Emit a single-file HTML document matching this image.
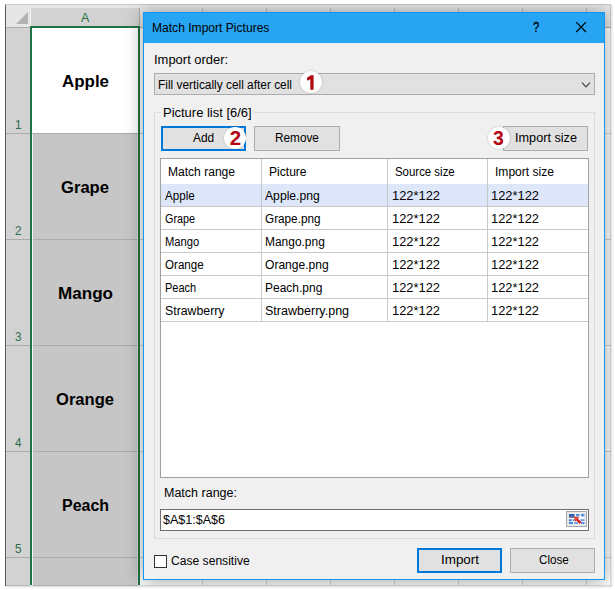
<!DOCTYPE html>
<html>
<head>
<meta charset="utf-8">
<title>Match Import Pictures</title>
<style>
html,body{margin:0;padding:0;background:#fff;}
body{width:615px;height:590px;position:relative;overflow:hidden;font-family:"Liberation Sans",sans-serif;font-size:12px;color:#000;}
.a{position:absolute;}
.t{position:absolute;white-space:nowrap;display:block;transform-origin:0 50%;}
</style>
</head>
<body>
<div class="a" style="left:5px;top:4px;width:606px;height:582px;background:#fff;box-shadow:1px 1px 2px rgba(0,0,0,0.16);overflow:hidden"><div class="a" style="left:-5px;top:-4px;width:615px;height:590px">
<div class="a" style="left:5px;top:5px;width:606px;height:22px;background:#e6e6e6"></div>
<div class="a" style="left:5px;top:4px;width:606px;height:1px;background:#c9c9c9"></div>
<div class="a" style="left:5px;top:27px;width:606px;height:1px;background:#ababab"></div>
<div class="a" style="left:31px;top:8px;width:108px;height:19px;background:#d2d2d2"></div>
<div class="a" style="left:30px;top:8px;width:1px;height:18px;background:#f3f3f3"></div>
<div class="a" style="left:139px;top:8px;width:1px;height:19px;background:#ababab"></div>
<div class="a" style="left:202px;top:8px;width:1px;height:19px;background:#bcbcbc"></div>
<div class="a" style="left:266px;top:8px;width:1px;height:19px;background:#bcbcbc"></div>
<div class="a" style="left:330px;top:8px;width:1px;height:19px;background:#bcbcbc"></div>
<div class="a" style="left:394px;top:8px;width:1px;height:19px;background:#bcbcbc"></div>
<div class="a" style="left:458px;top:8px;width:1px;height:19px;background:#bcbcbc"></div>
<div class="a" style="left:522px;top:8px;width:1px;height:19px;background:#bcbcbc"></div>
<div class="a" style="left:586px;top:8px;width:1px;height:19px;background:#bcbcbc"></div>
<svg class="a" style="left:16px;top:12px" width="13" height="13"><polygon points="12,0 12,12 0,12" fill="#b2b2b2"/></svg>
<span class="t" style="left:81px;top:10px;font-size:13px;line-height:15px;font-weight:normal;color:#217346;transform:scaleX(0.9500)">A</span>
<div class="a" style="left:6px;top:28px;width:24px;height:105px;background:#d2d2d2"></div>
<div class="a" style="left:6px;top:133px;width:24px;height:1px;background:#ababab"></div>
<div class="a" style="left:32px;top:28px;width:106px;height:105px;background:#fff"></div>
<div class="a" style="left:32px;top:133px;width:106px;height:1px;background:#ababab"></div>
<div class="a" style="left:140px;top:133px;width:471px;height:1px;background:#d4d4d4"></div>
<span class="t" style="left:15px;top:117px;font-size:13px;line-height:15px;font-weight:normal;color:#2b6b4a;transform:scaleX(0.9000)">1</span>
<div class="a" style="left:6px;top:134px;width:24px;height:105px;background:#d2d2d2"></div>
<div class="a" style="left:6px;top:239px;width:24px;height:1px;background:#ababab"></div>
<div class="a" style="left:32px;top:134px;width:106px;height:105px;background:#c6c6c6"></div>
<div class="a" style="left:32px;top:239px;width:106px;height:1px;background:#ababab"></div>
<div class="a" style="left:140px;top:239px;width:471px;height:1px;background:#d4d4d4"></div>
<span class="t" style="left:15px;top:223px;font-size:13px;line-height:15px;font-weight:normal;color:#2b6b4a;transform:scaleX(0.9000)">2</span>
<div class="a" style="left:6px;top:240px;width:24px;height:105px;background:#d2d2d2"></div>
<div class="a" style="left:6px;top:345px;width:24px;height:1px;background:#ababab"></div>
<div class="a" style="left:32px;top:240px;width:106px;height:105px;background:#c6c6c6"></div>
<div class="a" style="left:32px;top:345px;width:106px;height:1px;background:#ababab"></div>
<div class="a" style="left:140px;top:345px;width:471px;height:1px;background:#d4d4d4"></div>
<span class="t" style="left:15px;top:329px;font-size:13px;line-height:15px;font-weight:normal;color:#2b6b4a;transform:scaleX(0.9000)">3</span>
<div class="a" style="left:6px;top:346px;width:24px;height:105px;background:#d2d2d2"></div>
<div class="a" style="left:6px;top:451px;width:24px;height:1px;background:#ababab"></div>
<div class="a" style="left:32px;top:346px;width:106px;height:105px;background:#c6c6c6"></div>
<div class="a" style="left:32px;top:451px;width:106px;height:1px;background:#ababab"></div>
<div class="a" style="left:140px;top:451px;width:471px;height:1px;background:#d4d4d4"></div>
<span class="t" style="left:15px;top:435px;font-size:13px;line-height:15px;font-weight:normal;color:#2b6b4a;transform:scaleX(0.9000)">4</span>
<div class="a" style="left:6px;top:452px;width:24px;height:105px;background:#d2d2d2"></div>
<div class="a" style="left:6px;top:557px;width:24px;height:1px;background:#ababab"></div>
<div class="a" style="left:32px;top:452px;width:106px;height:105px;background:#c6c6c6"></div>
<div class="a" style="left:32px;top:557px;width:106px;height:1px;background:#ababab"></div>
<div class="a" style="left:140px;top:557px;width:471px;height:1px;background:#d4d4d4"></div>
<span class="t" style="left:15px;top:541px;font-size:13px;line-height:15px;font-weight:normal;color:#2b6b4a;transform:scaleX(0.9000)">5</span>
<div class="a" style="left:6px;top:558px;width:24px;height:28px;background:#d2d2d2"></div>
<div class="a" style="left:6px;top:586px;width:24px;height:1px;background:#ababab"></div>
<div class="a" style="left:32px;top:558px;width:106px;height:28px;background:#c6c6c6"></div>
<div class="a" style="left:32px;top:586px;width:106px;height:1px;"></div>
<div class="a" style="left:140px;top:586px;width:471px;height:1px;background:#d4d4d4"></div>
<div class="a" style="left:202px;top:28px;width:1px;height:557px;background:#d4d4d4"></div>
<div class="a" style="left:266px;top:28px;width:1px;height:557px;background:#d4d4d4"></div>
<div class="a" style="left:330px;top:28px;width:1px;height:557px;background:#d4d4d4"></div>
<div class="a" style="left:394px;top:28px;width:1px;height:557px;background:#d4d4d4"></div>
<div class="a" style="left:458px;top:28px;width:1px;height:557px;background:#d4d4d4"></div>
<div class="a" style="left:522px;top:28px;width:1px;height:557px;background:#d4d4d4"></div>
<div class="a" style="left:586px;top:28px;width:1px;height:557px;background:#d4d4d4"></div>
<div class="a" style="left:32px;top:134px;width:1px;height:452px;background:#f4f4f4"></div>
<div class="a" style="left:137px;top:134px;width:1px;height:452px;background:#d6d6d6"></div>
<div class="a" style="left:30px;top:26px;width:110px;height:2px;background:#217346"></div>
<div class="a" style="left:30px;top:26px;width:2px;height:559px;background:#217346"></div>
<div class="a" style="left:138px;top:26px;width:2px;height:559px;background:#217346"></div>
<div class="a" style="left:5px;top:5px;width:1px;height:581px;background:#5a5a5a"></div>
<span class="t" style="left:62px;top:73px;font-size:16px;line-height:18px;font-weight:bold;color:#000;transform:scaleX(1.0573)">Apple</span>
<span class="t" style="left:61px;top:179px;font-size:16px;line-height:18px;font-weight:bold;color:#000;transform:scaleX(1.0378)">Grape</span>
<span class="t" style="left:58px;top:285px;font-size:16px;line-height:18px;font-weight:bold;color:#000;transform:scaleX(1.0670)">Mango</span>
<span class="t" style="left:56px;top:391px;font-size:16px;line-height:18px;font-weight:bold;color:#000;transform:scaleX(1.0354)">Orange</span>
<span class="t" style="left:62px;top:497px;font-size:16px;line-height:18px;font-weight:bold;color:#000;transform:scaleX(0.9970)">Peach</span>
<div class="a" style="left:143px;top:12px;width:462px;height:568px;box-sizing:border-box;background:#f0f0f0;border:1px solid #1497f4;box-shadow:0 1px 17px 0 rgba(0,0,0,0.38);"></div>
<div class="a" style="left:144px;top:13px;width:460px;height:30px;background:#27a4f2"></div>
<span class="t" style="left:152px;top:21px;font-size:12px;line-height:14px;font-weight:normal;color:#000;transform:scaleX(1.0060)">Match Import Pictures</span>
<span class="t" style="left:533.4px;top:19px;font-size:14px;line-height:16px;-webkit-text-stroke:0.3px #000;transform:scaleX(0.8)">?</span>
<svg class="a" style="left:576px;top:22px" width="11" height="11"><path d="M0.2,0.2 L10,10 M10,0.2 L0.2,10" stroke="#000" stroke-width="1.2" fill="none"/></svg>
<span class="t" style="left:153.5px;top:53px;font-size:12px;line-height:14px;font-weight:normal;color:#000;transform:scaleX(1.0800)">Import order:</span>
<div class="a" style="left:154px;top:73px;width:441px;height:22px;box-sizing:border-box;background:#e1e1e1;border:1px solid #adadad"></div>
<span class="t" style="left:158px;top:78px;font-size:12px;line-height:14px;font-weight:normal;color:#000;transform:scaleX(0.9898)">Fill vertically cell after cell</span>
<svg class="a" style="left:581px;top:81px" width="10" height="8"><path d="M1,1.7 L5,5.8 L9,1.7" stroke="#45453a" stroke-width="1.2" fill="none"/></svg>
<div class="a" style="left:154px;top:112px;width:441px;height:427px;box-sizing:border-box;border:1px solid #dcdcdc"></div>
<div class="a" style="left:161px;top:106px;width:93px;height:14px;background:#f0f0f0"></div>
<span class="t" style="left:163px;top:106px;font-size:12px;line-height:14px;font-weight:normal;color:#000;transform:scaleX(1.0801)">Picture list [6/6]</span>
<div class="a" style="left:161px;top:126px;width:85px;height:25px;box-sizing:border-box;background:#e1e1e1;border:2px solid #0078d7"></div>
<span class="t" style="left:193px;top:131px;font-size:12px;line-height:14px;font-weight:normal;color:#000;transform:scaleX(0.9925)">Add</span>
<div class="a" style="left:254px;top:126px;width:86px;height:25px;box-sizing:border-box;background:#e1e1e1;border:1px solid #adadad"></div>
<span class="t" style="left:275.3px;top:131px;font-size:12px;line-height:14px;font-weight:normal;color:#000;transform:scaleX(0.9824)">Remove</span>
<div class="a" style="left:503px;top:126px;width:85px;height:25px;box-sizing:border-box;background:#e1e1e1;border:1px solid #adadad"></div>
<span class="t" style="left:514.5px;top:131px;font-size:12px;line-height:14px;font-weight:normal;color:#000;transform:scaleX(1.0564)">Import size</span>
<div class="a" style="left:300.0px;top:71.0px;width:22px;height:22px;border-radius:50%;background:#fff;box-shadow:0 0 2px rgba(0,0,0,0.25)"></div>
<div class="a" style="left:224.0px;top:126.5px;width:22px;height:22px;border-radius:50%;background:#fff;box-shadow:0 0 2px rgba(0,0,0,0.25)"></div>
<div class="a" style="left:488.0px;top:127.0px;width:22px;height:22px;border-radius:50%;background:#fff;box-shadow:0 0 2px rgba(0,0,0,0.25)"></div>
<svg class="a" style="left:300px;top:70px" width="24" height="24"><polygon points="10.6,5.2 13.6,5.2 13.6,19.8 10.3,19.8 10.3,9.3 7.4,10.7 6.8,7.9" fill="#ae0a12"/></svg>
<span class="t" style="left:229.8px;top:127.0px;font-size:20.5px;line-height:22.5px;font-weight:bold;color:#b1060f;transform:scaleX(1.0000)">2</span>
<span class="t" style="left:492.7px;top:127.19999999999999px;font-size:20.5px;line-height:22.5px;font-weight:bold;color:#b1060f;transform:scaleX(0.9500)">3</span>
<div class="a" style="left:160px;top:158px;width:429px;height:320px;box-sizing:border-box;background:#fff;border:1px solid #a0a0a0"></div>
<div class="a" style="left:161px;top:184px;width:427px;height:22px;background:#dee7fa"></div>
<div class="a" style="left:161px;top:206px;width:427px;height:1px;background:#c9c9c9"></div>
<div class="a" style="left:161px;top:229px;width:427px;height:1px;background:#c9c9c9"></div>
<div class="a" style="left:161px;top:252px;width:427px;height:1px;background:#c9c9c9"></div>
<div class="a" style="left:161px;top:275px;width:427px;height:1px;background:#c9c9c9"></div>
<div class="a" style="left:161px;top:298px;width:427px;height:1px;background:#c9c9c9"></div>
<div class="a" style="left:161px;top:321px;width:427px;height:1px;background:#c9c9c9"></div>
<div class="a" style="left:261px;top:159px;width:1px;height:163px;background:#c9c9c9"></div>
<div class="a" style="left:387px;top:159px;width:1px;height:163px;background:#c9c9c9"></div>
<div class="a" style="left:487px;top:159px;width:1px;height:163px;background:#c9c9c9"></div>
<span class="t" style="left:167.6px;top:165px;font-size:12px;line-height:14px;font-weight:normal;color:#000;transform:scaleX(1.0045)">Match range</span>
<span class="t" style="left:269.1px;top:165px;font-size:12px;line-height:14px;font-weight:normal;color:#000;transform:scaleX(1.0064)">Picture</span>
<span class="t" style="left:395.4px;top:165px;font-size:12px;line-height:14px;font-weight:normal;color:#000;transform:scaleX(0.9521)">Source size</span>
<span class="t" style="left:495.2px;top:165px;font-size:12px;line-height:14px;font-weight:normal;color:#000;transform:scaleX(1.0053)">Import size</span>
<span class="t" style="left:165.4px;top:189px;font-size:12px;line-height:14px;font-weight:normal;color:#000;transform:scaleX(0.9673)">Apple</span>
<span class="t" style="left:264.7px;top:189px;font-size:12px;line-height:14px;font-weight:normal;color:#000;transform:scaleX(1.0139)">Apple.png</span>
<span class="t" style="left:391.5px;top:189px;font-size:12px;line-height:14px;font-weight:normal;color:#000;transform:scaleX(1.0734)">122*122</span>
<span class="t" style="left:491.3px;top:189px;font-size:12px;line-height:14px;font-weight:normal;color:#000;transform:scaleX(1.0734)">122*122</span>
<span class="t" style="left:165.4px;top:212px;font-size:12px;line-height:14px;font-weight:normal;color:#000;transform:scaleX(0.8993)">Grape</span>
<span class="t" style="left:264.7px;top:212px;font-size:12px;line-height:14px;font-weight:normal;color:#000;transform:scaleX(0.9785)">Grape.png</span>
<span class="t" style="left:391.5px;top:212px;font-size:12px;line-height:14px;font-weight:normal;color:#000;transform:scaleX(1.0734)">122*122</span>
<span class="t" style="left:491.3px;top:212px;font-size:12px;line-height:14px;font-weight:normal;color:#000;transform:scaleX(1.0734)">122*122</span>
<span class="t" style="left:165.4px;top:235px;font-size:12px;line-height:14px;font-weight:normal;color:#000;transform:scaleX(0.9345)">Mango</span>
<span class="t" style="left:264.7px;top:235px;font-size:12px;line-height:14px;font-weight:normal;color:#000;transform:scaleX(0.9959)">Mango.png</span>
<span class="t" style="left:391.5px;top:235px;font-size:12px;line-height:14px;font-weight:normal;color:#000;transform:scaleX(1.0734)">122*122</span>
<span class="t" style="left:491.3px;top:235px;font-size:12px;line-height:14px;font-weight:normal;color:#000;transform:scaleX(1.0734)">122*122</span>
<span class="t" style="left:165.4px;top:258px;font-size:12px;line-height:14px;font-weight:normal;color:#000;transform:scaleX(0.9667)">Orange</span>
<span class="t" style="left:264.7px;top:258px;font-size:12px;line-height:14px;font-weight:normal;color:#000;transform:scaleX(1.0049)">Orange.png</span>
<span class="t" style="left:391.5px;top:258px;font-size:12px;line-height:14px;font-weight:normal;color:#000;transform:scaleX(1.0734)">122*122</span>
<span class="t" style="left:491.3px;top:258px;font-size:12px;line-height:14px;font-weight:normal;color:#000;transform:scaleX(1.0734)">122*122</span>
<span class="t" style="left:165.4px;top:281px;font-size:12px;line-height:14px;font-weight:normal;color:#000;transform:scaleX(0.9168)">Peach</span>
<span class="t" style="left:264.7px;top:281px;font-size:12px;line-height:14px;font-weight:normal;color:#000;transform:scaleX(0.9984)">Peach.png</span>
<span class="t" style="left:391.5px;top:281px;font-size:12px;line-height:14px;font-weight:normal;color:#000;transform:scaleX(1.0734)">122*122</span>
<span class="t" style="left:491.3px;top:281px;font-size:12px;line-height:14px;font-weight:normal;color:#000;transform:scaleX(1.0734)">122*122</span>
<span class="t" style="left:165.4px;top:304px;font-size:12px;line-height:14px;font-weight:normal;color:#000;transform:scaleX(1.0256)">Strawberry</span>
<span class="t" style="left:264.7px;top:304px;font-size:12px;line-height:14px;font-weight:normal;color:#000;transform:scaleX(1.0449)">Strawberry.png</span>
<span class="t" style="left:391.5px;top:304px;font-size:12px;line-height:14px;font-weight:normal;color:#000;transform:scaleX(1.0734)">122*122</span>
<span class="t" style="left:491.3px;top:304px;font-size:12px;line-height:14px;font-weight:normal;color:#000;transform:scaleX(1.0734)">122*122</span>
<span class="t" style="left:164px;top:486px;font-size:12px;line-height:14px;font-weight:normal;color:#000;transform:scaleX(1.0422)">Match range:</span>
<div class="a" style="left:160px;top:509px;width:429px;height:22px;box-sizing:border-box;background:#fff;border:1px solid #6f6f6f"></div>
<span class="t" style="left:163px;top:513px;font-size:12px;line-height:14px;font-weight:normal;color:#000;transform:scaleX(1.0423)">$A$1:$A$6</span>
<svg class="a" style="left:566px;top:511px" width="21" height="16" viewBox="0 0 21 16">
<rect x="0.5" y="0.5" width="20" height="15" fill="#e9e9e9" stroke="#a6a6a6"/>
<rect x="3" y="3" width="15.5" height="10" fill="#f4f8fd"/>
<rect x="3" y="3" width="5.5" height="2.6" fill="#2e63bd"/>
<rect x="10" y="3" width="3.5" height="2.4" fill="#5a90db"/>
<rect x="15" y="3" width="3.5" height="2.4" fill="#5a90db"/>
<rect x="3" y="5.6" width="5.5" height="1" fill="#1d2a4d"/>
<rect x="3" y="8.2" width="2.5" height="2" fill="#3f76cb"/>
<rect x="6.5" y="8.2" width="2" height="2" fill="#6a9de0"/>
<rect x="14.5" y="8.2" width="4" height="1.8" fill="#6a9de0"/>
<rect x="3" y="11" width="4" height="2" fill="#4a85d6"/>
<rect x="8" y="11" width="4" height="2" fill="#79a9e6"/>
<rect x="15" y="11" width="3.5" height="2" fill="#5a90db"/>
<path d="M8.2,5.6 L13.2,6.3 L11.9,7.7 L15.6,11 L13.6,13 L10.2,9.5 L8.8,10.8 Z" fill="#d8261c"/>
<path d="M9.2,6.4 L11.8,6.8 L9.7,8.9 Z" fill="#f0705a"/>
</svg>
<div class="a" style="left:154px;top:555px;width:13px;height:13px;box-sizing:border-box;background:#fff;border:1px solid #333"></div>
<span class="t" style="left:171px;top:554px;font-size:12px;line-height:14px;font-weight:normal;color:#000;transform:scaleX(1.0084)">Case sensitive</span>
<div class="a" style="left:417px;top:548px;width:85px;height:25px;box-sizing:border-box;background:#e1e1e1;border:2px solid #0078d7"></div>
<span class="t" style="left:441.3px;top:553px;font-size:12px;line-height:14px;font-weight:normal;color:#000;transform:scaleX(1.1171)">Import</span>
<div class="a" style="left:510px;top:548px;width:85px;height:25px;box-sizing:border-box;background:#e1e1e1;border:1px solid #adadad"></div>
<span class="t" style="left:539.2px;top:553px;font-size:12px;line-height:14px;font-weight:normal;color:#000;transform:scaleX(0.9678)">Close</span>
<div class="a" style="left:610px;top:5px;width:1px;height:581px;background:rgba(0,0,0,0.12)"></div>
<div class="a" style="left:5px;top:585px;width:606px;height:1px;background:rgba(0,0,0,0.12)"></div>
</div></div>
</body>
</html>
